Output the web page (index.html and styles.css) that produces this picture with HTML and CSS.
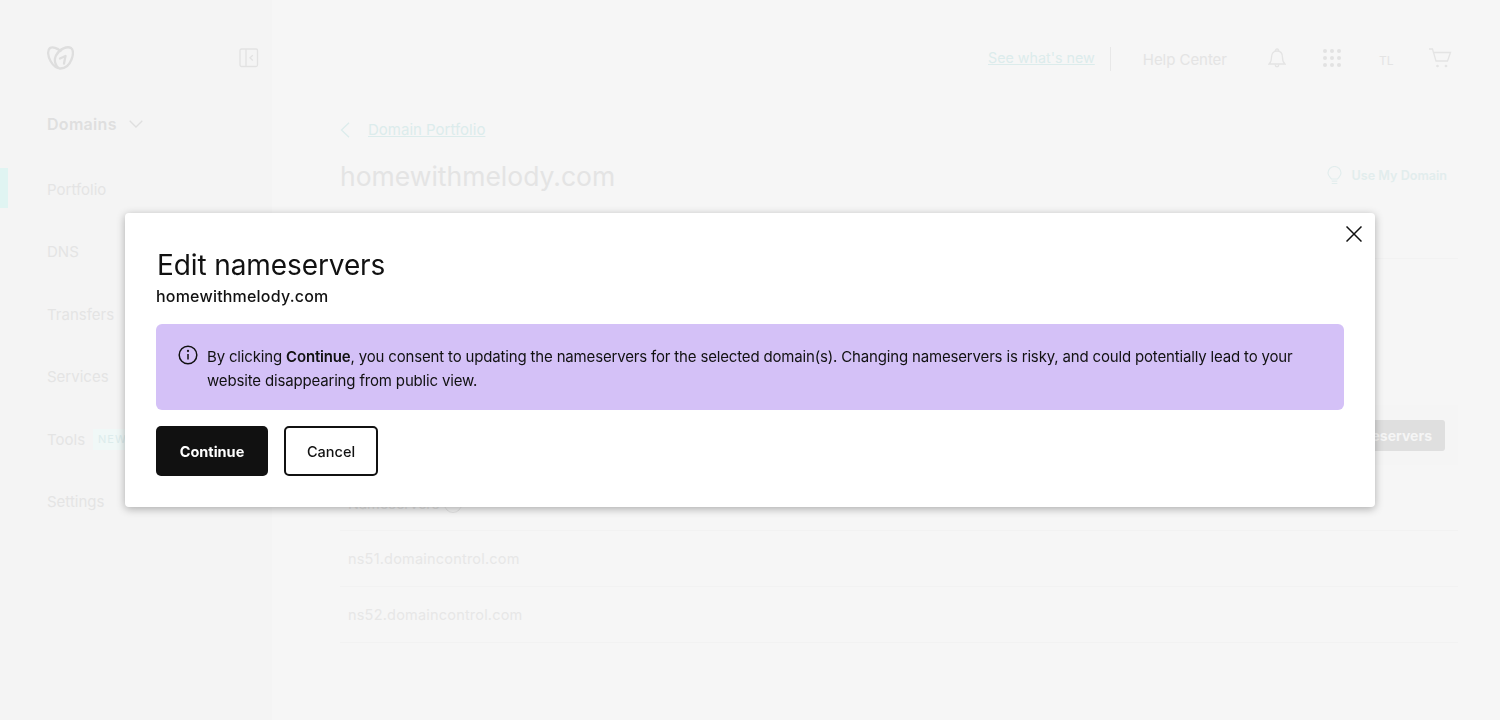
FILE: index.html
```html
<!DOCTYPE html>
<html lang="en">
<head>
    <meta charset="UTF-8">
    <meta name="viewport" content="width=device-width, initial-scale=1.0">
    <title>Edit nameservers</title>
    <link rel="stylesheet" href="styles.css">
</head>
<body>
    <div class="app">
        <aside class="sidebar">
            <div class="sidebar-top">
                <svg class="logo" width="27" height="24" viewBox="-.5 -.5 27 24" fill="none" stroke="#dedede" stroke-width="2.300" stroke-linecap="round" stroke-linejoin="round">
                    <path d="M13 4.500C10 1.500 5 0 2.500 1.500C-.5 4 .5 10 3 14.500C5 18 9 22 13 22C18 22 22 18 24 13C26 8 26 3 23.500 1.500C20-.5 12 2 8.500 9C6 14 8 20 12 22"/>
                    <path d="M12.500 12L18 9.500L16.500 17"/>
                </svg>
                <svg class="collapse" width="20" height="20" viewBox="0 0 20 20" fill="none" stroke="#e2e2e2" stroke-width="1.300">
                    <rect x="1" y="1" width="17.500" height="17.500" rx="1.500"/>
                    <path d="M7 1v17.500M13.800 7.200L11 9.800l2.800 2.600"/>
                </svg>
            </div>
            <div class="nav-title">
                <span>Domains</span>
                <svg width="14" height="8" viewBox="0 0 14 8" fill="none" stroke="#dfdfdf" stroke-width="1.300"><path d="M.7.7L7 7l6.300-6.300"/></svg>
            </div>
            <nav class="nav">
                <a class="nav-item active">Portfolio</a>
                <a class="nav-item">DNS</a>
                <a class="nav-item">Transfers</a>
                <a class="nav-item">Services</a>
                <a class="nav-item">Tools <span class="new-tag">NEW</span></a>
                <a class="nav-item">Settings</a>
            </nav>
        </aside>

        <div class="main">
            <header class="topbar">
                <a class="whats-new">See what's new</a>
                <span class="topbar-sep"></span>
                <a class="help">Help Center</a>
                <svg class="bell" width="18" height="20" viewBox="0 0 18 20" fill="none" stroke="#e4e4e4" stroke-width="1.300">
                    <path d="M1 16c2-1.500 2.500-3 2.500-6.500C3.500 5.500 5.500 3 9 3s5.500 2.500 5.500 6.500c0 3.500.5 5 2.500 6.500z"/>
                    <path d="M7.300 3C7.300 1.800 8 1 9 1s1.700.8 1.700 2M7.300 16.500c0 1.200.7 2.200 1.700 2.200s1.700-1 1.700-2.200"/>
                </svg>
                <div class="apps">
                    <i></i><i></i><i></i><i></i><i></i><i></i><i></i><i></i><i></i>
                </div>
                <span class="initials">TL</span>
                <svg class="cart" width="24" height="20" viewBox="0 0 24 20" fill="none" stroke="#e4e4e4" stroke-width="1.300">
                    <path d="M1 1h3.500l3.500 12h11.500L22.500 4.500H5.500"/>
                    <circle cx="9.500" cy="18" r=".7"/><circle cx="18" cy="18" r=".7"/>
                </svg>
            </header>

            <div class="content">
                <div class="breadcrumb">
                    <svg width="10" height="16" viewBox="0 0 10 16" fill="none" stroke="#dcecec" stroke-width="1.300"><path d="M9 .8L1.500 8 9 15.200"/></svg>
                    <a>Domain Portfolio</a>
                </div>
                <div class="title-row">
                    <h1>homewithmelody.com</h1>
                    <a class="use-domain">
                        <svg width="15" height="19" viewBox="0 0 15 19" fill="none" stroke="#e2eded" stroke-width="1.200">
                            <path d="M4.500 13C3 11 1 9.800 1 7a6.500 6.500 0 0 1 13 0c0 2.800-2 4-3.500 6z"/>
                            <path d="M4.700 15.200h5.600M4.700 17.500h5.600"/>
                        </svg>
                        Use My Domain
                    </a>
                </div>
                <div class="tabs-line"></div>
                <div class="ns-banner">
                    <span class="ns-button">Change Nameservers</span>
                </div>
                <div class="ns-head">Nameservers <span class="help-dot"></span></div>
                <div class="ns-row">ns51.domaincontrol.com</div>
                <div class="ns-row">ns52.domaincontrol.com</div>
            </div>
        </div>
    </div>

    <div class="overlay">
        <div class="modal">
            <button class="close" aria-label="Close">
                <svg width="16" height="16" viewBox="0 0 16 16" fill="none" stroke="#111" stroke-width="1.500"><path d="M.5.500l15 15M15.500.500l-15 15"/></svg>
            </button>
            <h2>Edit nameservers</h2>
            <p class="modal-domain">homewithmelody.com</p>
            <div class="alert">
                <svg class="alert-icon" width="20" height="20" viewBox="0 0 20 20" fill="none" stroke="#111" stroke-width="1.500">
                    <circle cx="10" cy="10" r="8.800"/>
                    <path d="M10 9v5.500"/>
                    <circle cx="10" cy="6" r=".4" fill="#111"/>
                </svg>
                <p>By clicking <b>Continue</b>, you consent to updating the nameservers for the selected domain(s). Changing nameservers is risky, and could potentially lead to your website disappearing from public view.</p>
            </div>
            <div class="actions">
                <button class="btn btn-primary">Continue</button>
                <button class="btn btn-secondary">Cancel</button>
            </div>
        </div>
    </div>
</body>
</html>
```

FILE: styles.css
```css
* {
    box-sizing: border-box;
}
body {
    margin: 0;
    height: 720px;
    overflow: hidden;
    background-color: #f6f6f6;
    font-family: Inter, "Liberation Sans", sans-serif;
    color: #e4e4e4;
}
.app {
    display: flex;
    height: 720px;
}
.sidebar {
    width: 272px;
    flex-shrink: 0;
    padding: 46px 13px 0 47px;
    background-color: #f4f4f4;
}
.sidebar-top {
    display: flex;
    align-items: center;
    justify-content: space-between;
    height: 24px;
}
.nav-title {
    display: flex;
    align-items: center;
    gap: 12px;
    margin-top: 44px;
    font-size: 16px;
    font-weight: 600;
    letter-spacing: .3px;
    color: #dfdfdf;
}
.nav {
    display: flex;
    flex-direction: column;
    margin-top: 24px;
}
.nav-item {
    position: relative;
    display: flex;
    align-items: center;
    gap: 8px;
    height: 62.500px;
    font-size: 15px;
}
.nav-item.active::before {
    content: "";
    position: absolute;
    left: -47px;
    top: 10px;
    width: 8px;
    height: 40px;
    background-color: #e0f4f2;
}
.new-tag {
    padding: 3.500px 5px;
    font-size: 11px;
    letter-spacing: 1px;
    color: #dcecec;
    background-color: #f0f8f7;
}
.main {
    flex: 1;
    min-width: 0;
}
.topbar {
    display: flex;
    align-items: center;
    height: 36px;
    margin-top: 41px;
    padding-left: 716px;
    font-size: 15px;
}
.topbar svg,
.apps {
    margin-bottom: 2px;
}
.whats-new {
    margin-bottom: 3px;
    font-size: 14.300px;
    color: #dcecec;
    text-decoration: underline;
}
.topbar-sep {
    width: 1px;
    height: 24px;
    margin: 0 32px 0 15px;
    background-color: #e8e8e8;
}
.help {
    margin-right: 41px;
    letter-spacing: -.05px;
}
.apps {
    display: grid;
    grid-template-columns: repeat(3, 4px);
    gap: 3px;
    margin-left: 37px;
    margin-right: 38px;
}
.apps i {
    width: 4px;
    height: 4px;
    border-radius: 50%;
    background-color: #e2e2e2;
}
.initials {
    font-size: 12px;
    margin-top: 2px;
    margin-right: 35px;
}
.content {
    padding: 43px 42px 0 68px;
}
.breadcrumb {
    display: flex;
    align-items: center;
    gap: 18px;
    font-size: 15px;
    color: #dcecec;
}
.breadcrumb a {
    text-decoration: underline;
}
.title-row {
    display: flex;
    align-items: center;
    justify-content: space-between;
    margin-top: 21px;
}
h1 {
    margin: 0;
    font-size: 26.500px;
    font-weight: 400;
    color: #e4e4e4;
}
.use-domain {
    display: flex;
    align-items: center;
    gap: 10px;
    margin-right: 11px;
    margin-bottom: 2px;
    font-size: 12.600px;
    font-weight: 600;
    color: #e2eded;
}
.tabs-line {
    height: 1px;
    margin-top: 66px;
    background-color: #f2f2f2;
}
.ns-banner {
    display: flex;
    justify-content: flex-end;
    align-items: center;
    height: 60px;
    margin-top: 146px;
    padding-right: 13px;
    background-color: #f5f5f5;
}
.ns-button {
    padding: 7px 13px;
    border-radius: 3px;
    font-size: 14px;
    font-weight: 700;
    color: #f5f5f5;
    background-color: #dfdfdf;
}
.ns-head {
    display: flex;
    align-items: center;
    gap: 5px;
    height: 66px;
    padding: 12px 8px 0;
    font-size: 14.500px;
    border-bottom: 1px solid #f2f2f2;
}
.help-dot {
    width: 18px;
    height: 18px;
    border: 1px solid #e4e4e4;
    border-radius: 50%;
}
.ns-row {
    display: flex;
    align-items: center;
    height: 56px;
    padding: 0 8px;
    font-size: 14.500px;
    letter-spacing: .2px;
    color: #e7e7e7;
    border-bottom: 1px solid #f2f2f2;
}
.overlay {
    position: fixed;
    inset: 0;
    display: flex;
    justify-content: center;
    align-items: flex-start;
    padding-top: 213px;
}
.modal {
    position: relative;
    width: 1250px;
    height: 294px;
    padding: 32px 31px;
    border-radius: 4px;
    background-color: #fff;
    color: #111;
    box-shadow: 0 2px 8px rgba(0, 0, 0, .3);
}
.close {
    position: absolute;
    top: 13px;
    right: 13px;
    padding: 0;
    border: 0;
    background: none;
    width: 16px;
    height: 16px;
}
h2 {
    margin: 0 0 0 1px;
    font-size: 28px;
    line-height: 41px;
    font-weight: 400;
    letter-spacing: -.1px;
}
.modal-domain {
    margin: 0;
    font-size: 16px;
    line-height: 20px;
    font-weight: 500;
    letter-spacing: .2px;
}
.alert {
    display: flex;
    gap: 9px;
    margin-top: 18px;
    padding: 21px 22px 17px;
    border-radius: 6px;
    background-color: #d4c1f7;
    font-size: 15px;
    line-height: 24px;
    letter-spacing: -.165px;
}
.alert-icon {
    flex-shrink: 0;
}
.alert p {
    margin: 0;
}
.alert b {
    font-weight: 600;
}
.actions {
    display: flex;
    gap: 16px;
    margin-top: 16px;
}
.btn {
    height: 50px;
    border-radius: 5px;
    font-family: inherit;
    font-size: 14.500px;
}
.btn-primary {
    width: 112px;
    border: 0;
    font-weight: 700;
    color: #fff;
    background-color: #111;
}
.btn-secondary {
    width: 94px;
    border: 2px solid #111;
    font-weight: 500;
    color: #111;
    background-color: #fff;
}
```
